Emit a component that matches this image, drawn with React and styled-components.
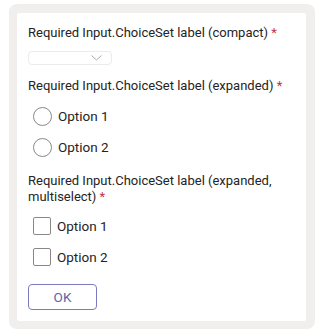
import React from "react";
import styled, { createGlobalStyle } from "styled-components";

const Global = createGlobalStyle`
  html, body { margin: 0; padding: 0; background: #ffffff; }
  body { font-family: Roboto, "Noto Sans", sans-serif; }
  * { box-sizing: border-box; }
`;

const Frame = styled.div`
  margin: 4px 9px 0 9px;
  width: 306px;
  background: #f0efee;
  border-radius: 8px;
  padding: 9px 9px 8px 8px;
`;

const Card = styled.div`
  background: #ffffff;
  border-radius: 2px;
  padding: 12px 11px 11px 11px;
  display: flex;
  flex-direction: column;
  align-items: flex-start;
`;

const Label = styled.div`
  font-size: 13px;
  line-height: 16px;
  color: #242424;
  margin-top: ${(p) => p.$mt || 0}px;
`;

const Star = styled.span`
  color: #c4314b;
`;

const Select = styled.div`
  margin-top: 10px;
  width: 84px;
  height: 14px;
  border: 1px solid #edebe9;
  border-radius: 4px;
  background: #fff;
  display: flex;
  align-items: center;
  justify-content: flex-end;
  padding-right: 9px;
`;

const Group = styled.div`
  margin-top: ${(p) => p.$mt || 0}px;
  display: flex;
  flex-direction: column;
`;

const OptionRow = styled.label`
  display: flex;
  align-items: center;
  height: 31px;
  padding-left: 5px;
  font-size: 13.5px;
  color: #242424;
  gap: 6px;
`;

const Radio = styled.span`
  width: 19px;
  height: 19px;
  border-radius: 50%;
  border: 1.5px solid #8a8886;
  display: inline-block;
`;

const Check = styled.span`
  width: 18px;
  height: 18px;
  border-radius: 2px;
  border: 1.5px solid #8a8886;
  display: inline-block;
`;

const Button = styled.button`
  margin-top: 11.5px;
  width: 69px;
  height: 26px;
  border: 1px solid #7b7cc0;
  border-radius: 4px;
  background: #fff;
  color: #6264a7;
  font-family: Roboto, "Noto Sans", sans-serif;
  font-size: 13.5px;
  padding: 0;
`;

const Chevron = () => (
  <svg width="11" height="6" viewBox="0 0 11 6" fill="none">
    <path d="M0.5 0.5 L5.5 5 L10.5 0.5" stroke="#a19f9d" strokeWidth="0.9" />
  </svg>
);

export default function App() {
  return (
    <>
      <Global />
      <Frame>
        <Card>
          <Label>
            Required Input.ChoiceSet label (compact) <Star>*</Star>
          </Label>
          <Select>
            <Chevron />
          </Select>
          <Label $mt={12.5}>
            Required Input.ChoiceSet label (expanded) <Star>*</Star>
          </Label>
          <Group $mt={7}>
            <OptionRow>
              <Radio />
              Option 1
            </OptionRow>
            <OptionRow>
              <Radio />
              Option 2
            </OptionRow>
          </Group>
          <Label $mt={10.5}>
            Required Input.ChoiceSet label (expanded, multiselect) <Star>*</Star>
          </Label>
          <Group $mt={5}>
            <OptionRow>
              <Check />
              Option 1
            </OptionRow>
            <OptionRow>
              <Check />
              Option 2
            </OptionRow>
          </Group>
          <Button>OK</Button>
        </Card>
      </Frame>
    </>
  );
}
